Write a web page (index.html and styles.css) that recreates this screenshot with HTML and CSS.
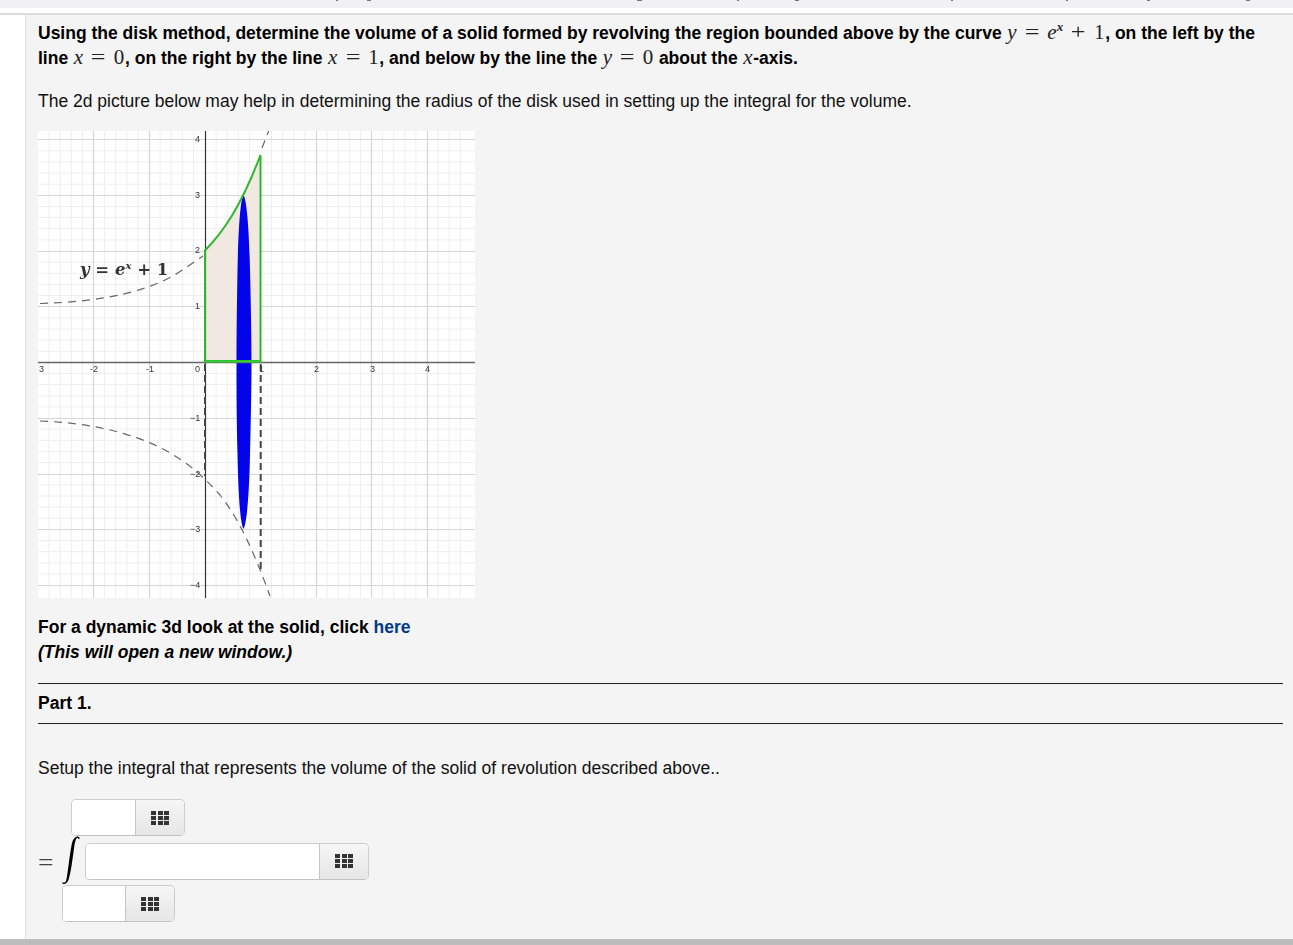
FILE: index.html
```html
<!DOCTYPE html>
<html lang="en">
<head>
<meta charset="utf-8">
<title>Disk method</title>
<link rel="stylesheet" href="styles.css">
</head>
<body>
<div class="topstrip"><svg class="clipped" width="1293" height="2" viewBox="0 0 1293 2" xmlns="http://www.w3.org/2000/svg"><path d="M336 0h2v1h-2zM367 0h4v1h-4zM637 0h5v1h-5zM737 0h2v1h-2zM795 0h4v1h-4zM951 0h2v1h-2zM1066 0h2v1h-2zM1147 0h3v1h-3zM1246 0h4v1h-4z" fill="#777"/></svg></div>
<div class="layout">
  <div class="gutter"></div>
  <main class="content">
    <p class="lead">Using the disk method, determine the volume of a solid formed by revolving the region bounded above by the curve <span class="m"><i>y</i> <span class="op">=</span> <i>e</i><sup><i>x</i></sup> <span class="op">+</span> 1</span>, on the left by the<br>line <span class="m"><i>x</i> <span class="op">=</span> 0</span>, on the right by the line <span class="m"><i>x</i> <span class="op">=</span> 1</span>, and below by the line the <span class="m"><i>y</i> <span class="op">=</span> 0</span> about the <span class="m"><i>x</i></span>-axis.</p>
    <p class="plain">The 2d picture below may help in determining the radius of the disk used in setting up the integral for the volume.</p>
    <svg class="graph" width="437" height="467" viewBox="38 131 437 467" xmlns="http://www.w3.org/2000/svg">
      <rect x="38" y="131" width="437" height="467" fill="#fff"/>
      <g class="blur">
        <path class="minor" d="M49.1 131V598M60.2 131V598M71.3 131V598M82.4 131V598M104.6 131V598M115.7 131V598M126.8 131V598M137.9 131V598M160.1 131V598M171.2 131V598M182.3 131V598M193.4 131V598M216.1 131V598M227.2 131V598M238.3 131V598M249.4 131V598M271.6 131V598M282.7 131V598M293.8 131V598M304.9 131V598M327.1 131V598M338.2 131V598M349.3 131V598M360.4 131V598M382.6 131V598M393.7 131V598M404.8 131V598M415.9 131V598M438.1 131V598M449.2 131V598M460.3 131V598"/>
        <path class="minor" d="M38 150.8H475M38 161.9H475M38 173H475M38 184.2H475M38 206.5H475M38 217.6H475M38 228.7H475M38 239.9H475M38 262.2H475M38 273.3H475M38 284.4H475M38 295.6H475M38 317.9H475M38 329H475M38 340.1H475M38 351.3H475M38 373.5H475M38 384.6H475M38 395.8H475M38 406.9H475M38 429.2H475M38 440.3H475M38 451.5H475M38 462.6H475M38 484.9H475M38 496H475M38 507.2H475M38 518.3H475M38 540.6H475M38 551.7H475M38 562.9H475M38 574H475"/>
        <path class="major" d="M93.5 131V598M149.5 131V598M316.5 131V598M371.5 131V598M427.5 131V598M38 139.5H475M38 195.5H475M38 251.5H475M38 306.5H475M38 418.5H475M38 474.5H475M38 529.5H475M38 585.5H475"/>
        <path class="region" d="M205 361V250.5C222 233 240 209 260.5 155V361Z"/>
        <path class="lens" d="M243.5 195C246.5 200 249 225 250 270C251 310 251.5 340 251.5 362C251.5 385 251 415 250 455C249 500 246.5 524 243.5 529C240.5 524 238.5 500 237.5 455C236.5 415 236.5 385 236.5 362C236.5 340 236.8 310 237.5 270C238.5 225 240.5 200 243.5 195Z"/>
        <path class="axis" d="M205.5 131V598"/>
        <path class="axis-h" d="M38 362.5H475"/>
        <path class="green" d="M205 361V250.5C222 233 240 209 260.5 155V361Z"/>
        <path class="green-b" d="M205 361.5H261"/>
        <path class="dash-v" d="M205 364V476M260.7 364V570"/>
        <path class="dash-c" d="M40 303.5C90 302 130 296 165 280C180 273 192 263 203 256"/>
        <path class="dash-c" d="M262 148L269 130"/>
        <path class="dash-c" d="M40 421C90 423 130 432 165 450C190 464 205 478 220 495C240 520 255 555 270 596"/>
        <g class="tick">
          <text x="39" y="372">3</text><text x="90" y="372">-2</text><text x="146" y="372">-1</text><text x="195" y="372">0</text><text x="259" y="372">1</text><text x="314" y="372">2</text><text x="370" y="372">3</text><text x="425" y="372">4</text>
          <text x="195" y="142">4</text><text x="195" y="198">3</text><text x="195" y="253">2</text><text x="195" y="309">1</text>
          <text x="190" y="421">−1</text><text x="190" y="477">−2</text><text x="190" y="532">−3</text><text x="190" y="588">−4</text>
        </g>
        <text class="eqn" x="80" y="275"><tspan font-style="italic">y</tspan> = <tspan font-style="italic">e</tspan><tspan class="eqn-sup" dy="-6" font-style="italic">x</tspan><tspan dy="6"> + 1</tspan></text>
      </g>
    </svg>
    <p class="dyn"><b>For a dynamic 3d look at the solid, click <a href="#">here</a></b><br><b><i>(This will open a new window.)</i></b></p>
    <div class="part"><b>Part 1.</b></div>
    <p class="setup">Setup the integral that represents the volume of the solid of revolution described above..</p>
    <div class="answer">
      <div class="limit limit-top"><div class="field f-top"><span class="box"></span><span class="btn"><span class="grid-ico"><i></i><i></i><i></i><i></i><i></i><i></i><i></i><i></i><i></i></span></span></div></div>
      <div class="main-row">
        <span class="eq">=</span>
        <svg class="int" width="20" height="48" viewBox="0 0 20 48" xmlns="http://www.w3.org/2000/svg"><path d="M0.2 46C2 47.4 3.4 46.4 4.2 44.5C5.8 38 7.4 20 9.6 9C10.6 4 12.6 0.4 15.8 0.6C17.6 0.8 18.2 2.4 17.1 3.2C16 3.1 15.8 1.6 15 1.9C13.4 2.8 12.6 8 11.8 14C10.2 26 8.8 36 6.8 43C5.6 46.8 3.2 48.5 0.9 47.9Z" fill="#000"/></svg>
        <div class="field f-long"><span class="box"></span><span class="btn"><span class="grid-ico"><i></i><i></i><i></i><i></i><i></i><i></i><i></i><i></i><i></i></span></span></div>
      </div>
      <div class="limit limit-bottom"><div class="field f-bottom"><span class="box"></span><span class="btn"><span class="grid-ico"><i></i><i></i><i></i><i></i><i></i><i></i><i></i><i></i><i></i></span></span></div></div>
    </div>
  </main>
</div>
<div class="footbar"></div>
</body>
</html>
```
FILE: styles.css
```css
html, body { margin: 0; padding: 0; }
body {
  width: 1293px; height: 945px; overflow: hidden; background: #fff;
  font-family: "Liberation Sans", Arial, sans-serif; font-size: 17.5px; color: #111;
  display: flex; flex-direction: column;
}
.topstrip { height: 8px; background: #f1f1f3; margin-bottom: 5px; flex: none; }
.clipped { display: block; }
.layout { flex: 1; display: flex; border-top: 2px solid #dcdce0; min-height: 0; }
.gutter { width: 25px; flex: none; background: #fff; border-right: 1px solid #e3e3e3; }
.content { flex: 1; background: #f4f4f4; padding: 6px 10px 0 12px; min-width: 0; }
.lead { margin: 0; font-weight: 700; line-height: 25px; color: #000; }
.m { font-family: "Liberation Serif", serif; font-weight: 400; font-size: 21px; line-height: 0; color: #222; margin: 0 0.7px; }
.m sup { font-size: 13px; line-height: 0; vertical-align: 8px; font-weight: 700; }
.op { display: inline-block; width: 0.778em; margin: 0 2px; text-align: center; transform: scaleX(1.25); line-height: 0; }
.plain { margin: 18px 0 17px; line-height: 25px; }
.graph { display: block; }
.blur { filter: blur(0.5px); }
.minor { stroke: #eeeeee; stroke-width: 1; fill: none; }
.major { stroke: #d6d6d6; stroke-width: 1.2; fill: none; }
.region { fill: #f1e8e2; stroke: none; }
.lens { fill: #0404ea; }
.axis { stroke: #333; stroke-width: 1.2; }
.axis-h { stroke: #666; stroke-width: 1.4; }
.green { fill: none; stroke: #2fb62f; stroke-width: 2; }
.green-b { stroke: #2fd02f; stroke-width: 2; }
.dash-v { stroke: #444; stroke-width: 2; stroke-dasharray: 7 4; fill: none; }
.dash-c { stroke: #666; stroke-width: 1.2; stroke-dasharray: 8 6; fill: none; }
.tick text { font-family: "Liberation Sans", sans-serif; font-size: 9px; fill: #333; }
.eqn { font-family: "DejaVu Serif", serif; font-size: 16.5px; fill: #333; font-weight: 700; }
.eqn-sup { font-size: 10px; }
.dyn { margin: 17px 0 0; line-height: 25px; color: #000; }
.dyn a { color: #003a8c; text-decoration: none; }
.part { margin-top: 18px; border-top: 1px solid #222; border-bottom: 1px solid #222; height: 39px; line-height: 38px; color: #000; }
.setup { margin: 32px 0 0; line-height: 25px; }
.answer { margin-top: 18px; }
.limit-top { padding-left: 33px; }
.limit-bottom { padding-left: 24px; margin-top: 5px; }
.main-row { display: flex; align-items: center; margin-top: 6px; height: 38px; }
.eq { width: 24px; box-sizing: border-box; font-family: "Liberation Serif", serif; font-size: 24px; color: #444; flex: none; line-height: 38px; margin-top: 2px; transform: scaleX(1.15); transform-origin: left center; }
.int { flex: none; margin-right: 3px; margin-top: -2px; overflow: visible; }
.field { display: flex; height: 37px; box-sizing: border-box; border: 1px solid #ccc; border-bottom-color: #c2c2c2; border-radius: 5px; overflow: hidden; background: #fff; }
.f-top { width: 114px; }
.f-bottom { width: 113px; }
.f-long { width: 284px; }
.box { flex: 1; background: #fff; }
.btn { width: 48px; flex: none; border-left: 1px solid #c4c4c4; background: linear-gradient(#f6f6f6, #e6e6e6); display: flex; align-items: center; justify-content: center; }
.grid-ico { display: grid; grid-template-columns: repeat(3, 5px); grid-auto-rows: 4px; gap: 1px 1.5px; }
.grid-ico i { background: #333; display: block; }
.footbar { height: 6px; background: #bcbcbc; flex: none; }
```
